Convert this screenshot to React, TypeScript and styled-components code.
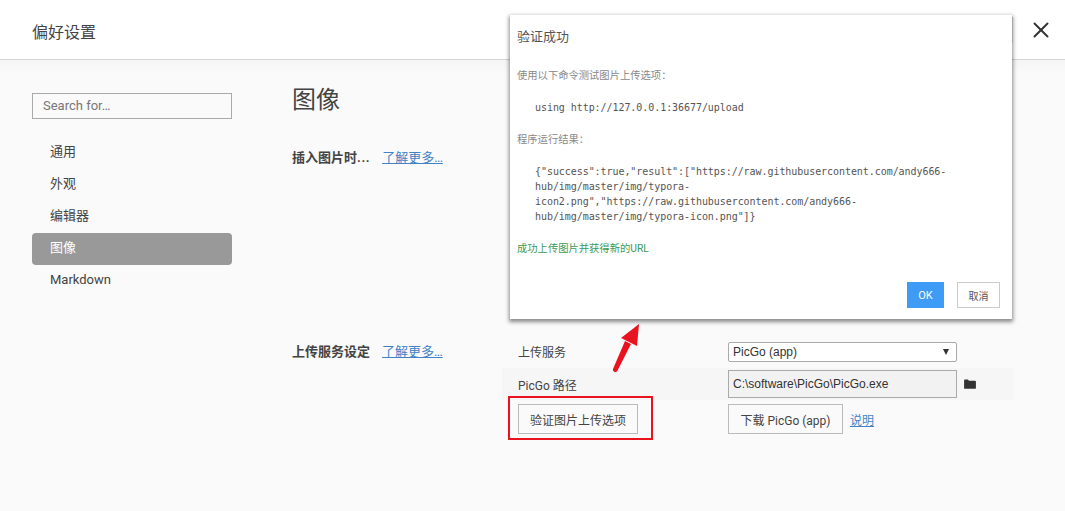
import React from 'react';
import styled, { createGlobalStyle } from 'styled-components';
import { X } from 'lucide-react';

const GlobalStyle = createGlobalStyle`
  html, body {
    margin: 0;
    padding: 0;
    background: #fafafa;
  }
  body {
    font-family: Roboto, "Noto Sans CJK SC", sans-serif;
    color: #444;
  }
`;

const Page = styled.div`
  position: relative;
  width: 1065px;
  height: 511px;
  overflow: hidden;
  background: #fafafa;
`;

const Header = styled.header`
  height: 60px;
  box-sizing: border-box;
  padding: 2px 11px 0 32px;
  display: flex;
  align-items: center;
  justify-content: space-between;
  background: #fff;
  border-bottom: 1px solid #d4d4d4;
  font-size: 16px;
  color: #444;
`;

const CloseButton = styled.button`
  width: 26px;
  height: 26px;
  margin-top: -2px;
  padding: 0;
  border: 0;
  background: none;
  color: #333;
  display: flex;
`;

const Body = styled.div`
  display: flex;
  padding-left: 32px;
  height: 451px;
  background: linear-gradient(#f5f5f5, #fafafa 14px);
`;

const Sidebar = styled.nav`
  width: 200px;
  padding-top: 33px;
  flex: none;
`;

const Search = styled.input`
  display: block;
  width: 200px;
  height: 26px;
  box-sizing: border-box;
  margin-bottom: 18px;
  padding: 0 10px 2px;
  border: 1px solid #a9a9a9;
  background: #fafafa;
  font: 13px Roboto, sans-serif;
  &::placeholder {
    color: #777;
    opacity: 1;
  }
`;

const NavItem = styled.div<{ $active?: boolean }>`
  height: 32px;
  line-height: 30px;
  padding-left: 18px;
  border-radius: 4px;
  font-size: 13px;
  color: ${p => (p.$active ? '#fff' : '#444')};
  background: ${p => (p.$active ? '#999' : 'transparent')};
`;

const Main = styled.main`
  margin-left: 60px;
  flex: 1;
`;

const Title = styled.h1`
  margin: 22px 0 0;
  font-size: 24px;
  font-weight: 400;
  line-height: 36px;
  color: #444;
`;

const SectionHead = styled.div<{ $gap: number }>`
  display: flex;
  gap: 12px;
  margin-top: ${p => p.$gap}px;
  line-height: 20px;
  font-size: 13px;
`;

const SectionName = styled.b`
  min-width: 78px;
  font-weight: 700;
  color: #444;
`;

const Dots = styled.span`
  letter-spacing: 0.6px;
`;

const Link = styled.a<{ $small?: boolean }>`
  color: #4183c4;
  text-decoration: underline;
  font-size: ${p => (p.$small ? 12 : 13)}px;
`;

const Settings = styled.div`
  margin: -27px 0 0 210px;
  width: 511px;
  font-size: 12px;
`;

const Row = styled.div<{ $shaded?: boolean; $height: number }>`
  display: flex;
  align-items: center;
  height: ${p => p.$height}px;
  padding-left: 16px;
  background: ${p => (p.$shaded ? '#f6f6f6' : 'transparent')};
`;

const RowLabel = styled.div`
  width: 210px;
  flex: none;
`;

const Select = styled.div`
  width: 229px;
  height: 20px;
  box-sizing: border-box;
  padding: 0 7px 0 4px;
  display: flex;
  align-items: center;
  justify-content: space-between;
  border: 1px solid #aaa;
  border-radius: 2px;
  background: #fff;
  font: 12px "Liberation Sans", sans-serif;
  color: #333;
`;

const Caret = styled.span`
  width: 0;
  height: 0;
  border-left: 3.5px solid transparent;
  border-right: 3.5px solid transparent;
  border-top: 6px solid #333;
`;

const PathField = styled.div`
  width: 229px;
  height: 28px;
  box-sizing: border-box;
  padding: 0 4px;
  line-height: 26px;
  border: 1px solid #aaa;
  background: #f2f2f2;
  font: 12px/26px "Liberation Sans", sans-serif;
  color: #333;
`;

const FolderIcon = styled.svg`
  width: 12px;
  height: 10px;
  margin-left: 7px;
`;

const PlainButton = styled.button<{ $width: number }>`
  width: ${p => p.$width}px;
  height: 30px;
  padding: 0;
  border: 1px solid #bbb;
  background: #fafafa;
  font: 12px Roboto, "Noto Sans CJK SC", sans-serif;
  color: #444;
`;

const DownloadButton = styled(PlainButton)`
  margin-right: 7px;
`;

const Dialog = styled.section`
  position: absolute;
  left: 510px;
  top: 15px;
  width: 502px;
  height: 304px;
  box-sizing: border-box;
  padding: 13px 7px 0;
  background: #fff;
  box-shadow: 0 2px 4px 1px rgba(0, 0, 0, 0.45);
  &::after {
    content: '';
    position: absolute;
    right: -1px;
    top: 2px;
    width: 1px;
    height: 26px;
    background: #a8a8a8;
  }
`;

const DialogTitle = styled.div`
  font-size: 13px;
  line-height: 18px;
  color: #555;
`;

const Note = styled.p<{ $gap: number; $green?: boolean }>`
  margin: ${p => p.$gap}px 0 0;
  font-size: 10.3px;
  line-height: 14px;
  color: ${p => (p.$green ? '#3c9a56' : '#888')};
`;

const Code = styled.pre<{ $gap: number }>`
  margin: ${p => p.$gap}px 0 0;
  padding-left: 18px;
  font: 10px/15px "DejaVu Sans Mono", monospace;
  letter-spacing: -0.06px;
  color: #555;
`;

const DialogActions = styled.div`
  position: absolute;
  right: 12px;
  bottom: 11px;
  display: flex;
  gap: 13px;
`;

const OkButton = styled.button`
  width: 37px;
  height: 26px;
  padding: 0;
  border: 0;
  background: #3e9cf6;
  color: #fff;
  font: 11px Roboto, sans-serif;
`;

const CancelButton = styled.button`
  width: 43px;
  height: 26px;
  padding: 0;
  border: 1px solid #ccc;
  background: #fff;
  color: #555;
  font: 10px "Noto Sans CJK SC", sans-serif;
`;

const Highlight = styled.div`
  position: absolute;
  left: 508px;
  top: 396px;
  width: 145px;
  height: 44px;
  box-sizing: border-box;
  border: 2px solid #e8131f;
`;

const Arrow = styled.svg`
  position: absolute;
  left: 608px;
  top: 320px;
  width: 36px;
  height: 56px;
`;

export default function App() {
  return (
    <Page>
      <GlobalStyle />
      <Header>
        <span>偏好设置</span>
        <CloseButton>
          <X size={26} strokeWidth={1.8} />
        </CloseButton>
      </Header>
      <Body>
        <Sidebar>
          <Search placeholder="Search for…" readOnly />
          <NavItem>通用</NavItem>
          <NavItem>外观</NavItem>
          <NavItem>编辑器</NavItem>
          <NavItem $active>图像</NavItem>
          <NavItem>Markdown</NavItem>
        </Sidebar>
        <Main>
          <Title>图像</Title>
          <SectionHead $gap={30}>
            <SectionName>插入图片时<Dots>...</Dots></SectionName>
            <Link>了解更多…</Link>
          </SectionHead>
          <SectionHead $gap={174}>
            <SectionName>上传服务设定</SectionName>
            <Link>了解更多…</Link>
          </SectionHead>
          <Settings>
            <Row $height={33}>
              <RowLabel>上传服务</RowLabel>
              <Select>
                PicGo (app)
                <Caret />
              </Select>
            </Row>
            <Row $shaded $height={32}>
              <RowLabel>PicGo 路径</RowLabel>
              <PathField>C:\software\PicGo\PicGo.exe</PathField>
              <FolderIcon viewBox="0 0 13 11">
                <path d="M0 1.5C0 .8.5.5 1 .5h3.2l1.2 1.3H12c.6 0 1 .4 1 1v7c0 .6-.4 1-1 1H1c-.6 0-1-.4-1-1z" fill="#333" />
              </FolderIcon>
            </Row>
            <Row $height={38}>
              <RowLabel>
                <PlainButton $width={120}>验证图片上传选项</PlainButton>
              </RowLabel>
              <DownloadButton $width={115}>下载 PicGo (app)</DownloadButton>
              <Link $small>说明</Link>
            </Row>
          </Settings>
        </Main>
      </Body>
      <Dialog>
        <DialogTitle>验证成功</DialogTitle>
        <Note $gap={23}>使用以下命令测试图片上传选项：</Note>
        <Code $gap={17}>using http://127.0.0.1:36677/upload</Code>
        <Note $gap={18}>程序运行结果：</Note>
        <Code $gap={17}>
          {'{"success":true,"result":["https://raw.githubusercontent.com/andy666-\nhub/img/master/img/typora-\nicon2.png","https://raw.githubusercontent.com/andy666-\nhub/img/master/img/typora-icon.png"]}'}
        </Code>
        <Note $gap={18} $green>成功上传图片并获得新的URL</Note>
        <DialogActions>
          <OkButton>OK</OkButton>
          <CancelButton>取消</CancelButton>
        </DialogActions>
      </Dialog>
      <Arrow viewBox="0 0 36 56">
        <path d="M5 49L17 21L23 24L9.3 51A2.4 2.4 0 0 1 5 49Z" fill="#e8131f" />
        <path d="M31 4L13 18L29 26Z" fill="#e8131f" />
      </Arrow>
      <Highlight />
    </Page>
  );
}
